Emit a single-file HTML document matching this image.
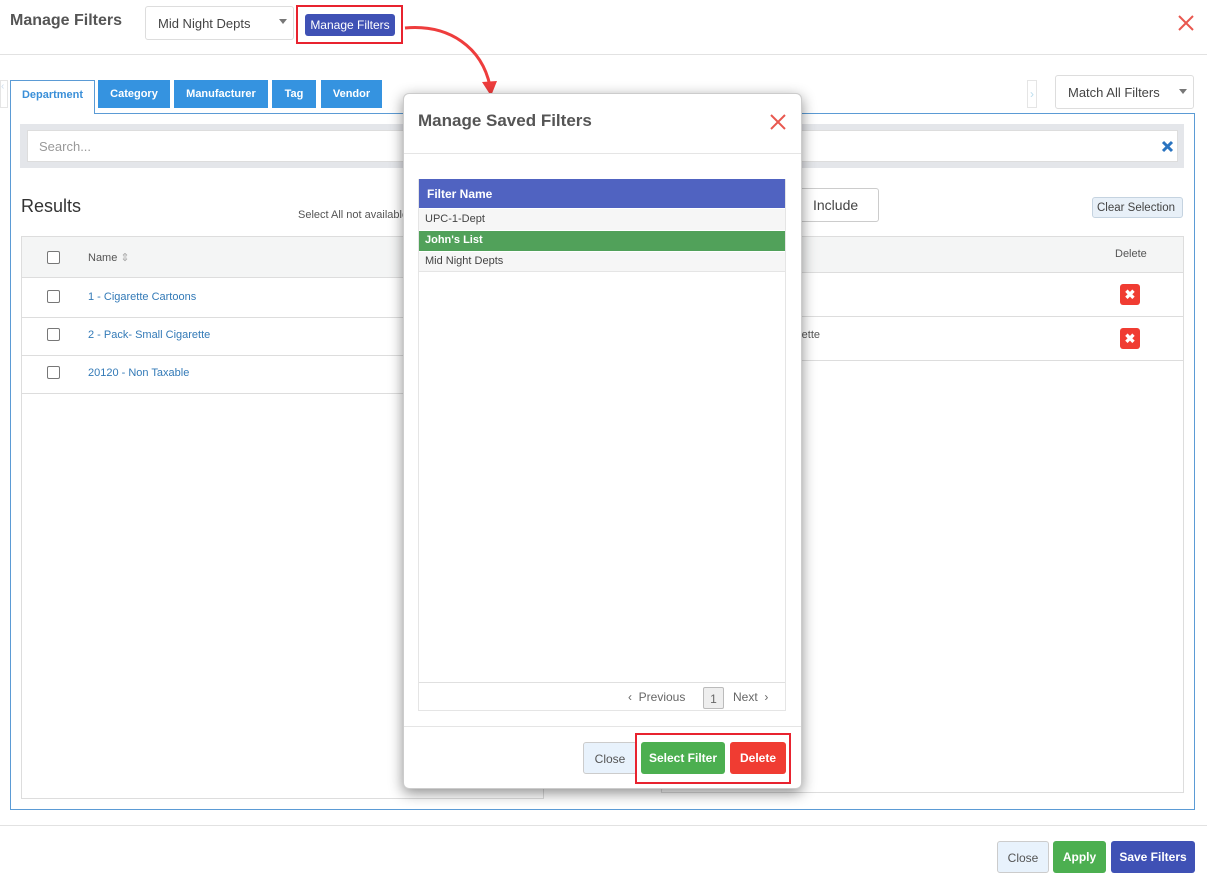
<!DOCTYPE html>
<html><head><meta charset="utf-8">
<style>
*{box-sizing:border-box;margin:0;padding:0}
body{width:1207px;height:885px;position:relative;background:#fff;font-family:"Liberation Sans",sans-serif;color:#444;overflow:hidden}
.a{position:absolute}
.btn{position:absolute;border-radius:3px;color:#fff;font-size:12px;font-weight:bold;display:flex;align-items:center;justify-content:center}
.tab{position:absolute;top:80px;height:28px;background:#3593e0;color:#fff;font-size:11px;font-weight:bold;display:flex;align-items:center;justify-content:center}
.cb{position:absolute;width:13px;height:13px;border:1px solid #777;border-radius:2px;background:#fff}
.lnk{position:absolute;font-size:11px;color:#337ab7}
.hl{position:absolute;height:1px;background:#ddd}
.del{position:absolute;width:20px;height:21px;background:#f03c32;border-radius:3px;color:#fff;font-size:13px;font-weight:bold;display:flex;align-items:center;justify-content:center}
</style></head><body>
<div class="a" style="left:10px;top:12px;font-size:16px;font-weight:bold;color:#555">Manage Filters</div>
<div class="a" style="left:145px;top:6px;width:149px;height:34px;border:1px solid #ddd;border-radius:3px;font-size:13px;color:#444;padding:9px 0 0 12px">Mid Night Depts</div>
<div class="a" style="left:279px;top:19px;border-left:4px solid transparent;border-right:4px solid transparent;border-top:5px solid #777"></div>
<div class="a" style="left:296px;top:5px;width:107px;height:39px;border:2px solid #e8232f"></div>
<div class="btn" style="left:305px;top:14px;width:90px;height:22px;background:#3f51b5;font-weight:normal">Manage Filters</div>
<svg class="a" style="left:1177px;top:14px" width="18" height="18"><path d="M2 2L16 16M16 2L2 16" stroke="#e8584f" stroke-width="2"/></svg>
<div class="hl" style="left:0;top:54px;width:1207px;background:#e2e2e2"></div>
<svg class="a" style="left:400px;top:20px" width="110" height="85"><path d="M5 8 C50 4 82 28 90 66" fill="none" stroke="#ee3d3d" stroke-width="3"/><path d="M82 62L91 76L97 61Z" fill="#ee3d3d"/></svg>

<div class="a" style="left:0;top:80px;width:8px;height:28px;border:1px solid #e5e5e5;color:#cde;font-size:10px">‹</div>
<div class="a" style="left:10px;top:80px;width:85px;height:34px;border:1px solid #5b9bd5;border-bottom:none;background:#fff;color:#3a8fd8;font-size:11px;font-weight:bold;text-align:center;padding-top:8px;z-index:2">Department</div>
<div class="tab" style="left:98px;width:72px">Category</div>
<div class="tab" style="left:174px;width:94px">Manufacturer</div>
<div class="tab" style="left:272px;width:44px">Tag</div>
<div class="tab" style="left:321px;width:61px">Vendor</div>
<div class="a" style="left:1027px;top:80px;width:10px;height:28px;border:1px solid #e5e5e5;color:#bde;font-size:12px;text-align:center;padding-top:6px">›</div>
<div class="a" style="left:1055px;top:75px;width:139px;height:34px;border:1px solid #ddd;border-radius:3px;font-size:13px;color:#444;padding:9px 0 0 12px">Match All Filters</div>
<div class="a" style="left:1179px;top:89px;border-left:4px solid transparent;border-right:4px solid transparent;border-top:5px solid #777"></div>

<div class="a" style="left:10px;top:113px;width:1185px;height:697px;border:1px solid #5b9bd5"></div>
<div class="a" style="left:20px;top:124px;width:1164px;height:44px;background:#e4e6ea"></div>
<div class="a" style="left:27px;top:130px;width:1151px;height:32px;background:#fff;border:1px solid #ddd;font-size:13px;color:#999;padding:8px 0 0 11px">Search...</div>
<svg class="a" style="left:1161px;top:140px" width="13" height="13"><path d="M2 2L11 11M11 2L2 11" stroke="#2a74c0" stroke-width="3"/></svg>

<div class="a" style="left:21px;top:196px;font-size:18px;color:#333">Results</div>
<div class="a" style="left:298px;top:209px;font-size:11px;color:#555">Select All not available</div>
<div class="a" style="left:21px;top:236px;width:523px;height:563px;border:1px solid #ddd"></div>
<div class="a" style="left:22px;top:237px;width:521px;height:41px;background:#f4f5f5;border-bottom:1px solid #ddd"></div>
<div class="cb" style="left:47px;top:251px"></div>
<div class="a" style="left:88px;top:251px;font-size:11px;color:#555">Name <span style="color:#aaa">⇕</span></div>
<div class="cb" style="left:47px;top:290px"></div><div class="lnk" style="left:88px;top:291px">1 - Cigarette Cartoons</div>
<div class="hl" style="left:22px;top:317px;width:521px"></div>
<div class="cb" style="left:47px;top:328px"></div><div class="lnk" style="left:88px;top:329px">2 - Pack- Small Cigarette</div>
<div class="hl" style="left:22px;top:355px;width:521px"></div>
<div class="cb" style="left:47px;top:366px"></div><div class="lnk" style="left:88px;top:367px">20120 - Non Taxable</div>
<div class="hl" style="left:22px;top:393px;width:521px"></div>

<div class="a" style="left:780px;top:188px;width:99px;height:34px;border:1px solid #ccc;border-radius:3px;font-size:14px;color:#444;padding:8px 0 0 32px">Include</div>
<div class="a" style="left:1092px;top:197px;width:91px;height:21px;border:1px solid #c5d3e0;background:#e8f0f8;border-radius:3px;font-size:11.5px;color:#444;padding:4px 0 0 4px;white-space:nowrap">Clear Selection</div>
<div class="a" style="left:661px;top:236px;width:523px;height:557px;border:1px solid #ddd"></div>
<div class="a" style="left:662px;top:237px;width:521px;height:36px;background:#f4f5f5;border-bottom:1px solid #ddd"></div>
<div class="a" style="left:1115px;top:248px;font-size:11px;color:#555">Delete</div>
<div class="del" style="left:1120px;top:284px">✖</div>
<div class="hl" style="left:662px;top:316px;width:521px"></div>
<div class="a" style="left:798px;top:329px;font-size:11px;color:#555">rette</div>
<div class="del" style="left:1120px;top:328px">✖</div>
<div class="hl" style="left:662px;top:360px;width:521px"></div>

<div class="hl" style="left:0;top:825px;width:1207px;background:#e2e2e2"></div>
<div class="a" style="left:997px;top:841px;width:52px;height:32px;border:1px solid #ccc;background:#e8f2fc;border-radius:3px;font-size:12px;color:#555;text-align:center;padding-top:9px">Close</div>
<div class="btn" style="left:1053px;top:841px;width:53px;height:32px;background:#4caf50">Apply</div>
<div class="btn" style="left:1111px;top:841px;width:84px;height:32px;background:#3f51b5">Save Filters</div>

<div class="a" style="left:403px;top:93px;width:399px;height:696px;background:#fff;border-radius:6px;box-shadow:0 4px 14px rgba(0,0,0,.45);border:1px solid #ccc"></div>
<div class="a" style="left:418px;top:111px;font-size:17px;font-weight:bold;color:#555">Manage Saved Filters</div>
<svg class="a" style="left:769px;top:113px" width="18" height="18"><path d="M2 2L16 16M16 2L2 16" stroke="#e8584f" stroke-width="2"/></svg>
<div class="hl" style="left:404px;top:153px;width:397px;background:#e5e5e5"></div>
<div class="a" style="left:418px;top:179px;width:368px;height:532px;border:1px solid #e5e5e5"></div>
<div class="a" style="left:419px;top:179px;width:366px;height:29px;background:#5063c1;color:#fff;font-size:12px;font-weight:bold;padding:8px 0 0 8px">Filter Name</div>
<div class="a" style="left:419px;top:209px;width:366px;height:21px;background:#f6f6f6;font-size:11px;color:#444;padding:4px 0 0 6px">UPC-1-Dept</div>
<div class="a" style="left:419px;top:231px;width:366px;height:20px;background:#51a15a;font-size:11px;color:#fff;padding:3px 0 0 6px;font-weight:bold">John's List</div>
<div class="a" style="left:419px;top:252px;width:366px;height:20px;background:#f6f6f6;font-size:11px;color:#444;padding:3px 0 0 6px;border-bottom:1px solid #e5e5e5">Mid Night Depts</div>
<div class="hl" style="left:419px;top:682px;width:366px;background:#e0e0e0"></div>
<div class="a" style="left:628px;top:690px;font-size:12px;color:#666">‹&nbsp; Previous</div>
<div class="a" style="left:703px;top:687px;width:21px;height:22px;border:1px solid #bbb;background:#eee;border-radius:2px;font-size:12px;color:#666;text-align:center;padding-top:4px">1</div>
<div class="a" style="left:733px;top:690px;font-size:12px;color:#666">Next &nbsp;›</div>
<div class="hl" style="left:404px;top:726px;width:397px;background:#e5e5e5"></div>
<div class="a" style="left:583px;top:742px;width:54px;height:32px;border:1px solid #ccc;background:#e8f2fc;border-radius:3px;font-size:12px;color:#555;text-align:center;padding-top:9px">Close</div>
<div class="a" style="left:635px;top:733px;width:156px;height:51px;border:2px solid #e8232f"></div>
<div class="btn" style="left:641px;top:742px;width:84px;height:32px;background:#4caf50">Select Filter</div>
<div class="btn" style="left:730px;top:742px;width:56px;height:32px;background:#f03c32">Delete</div>
</body></html>
